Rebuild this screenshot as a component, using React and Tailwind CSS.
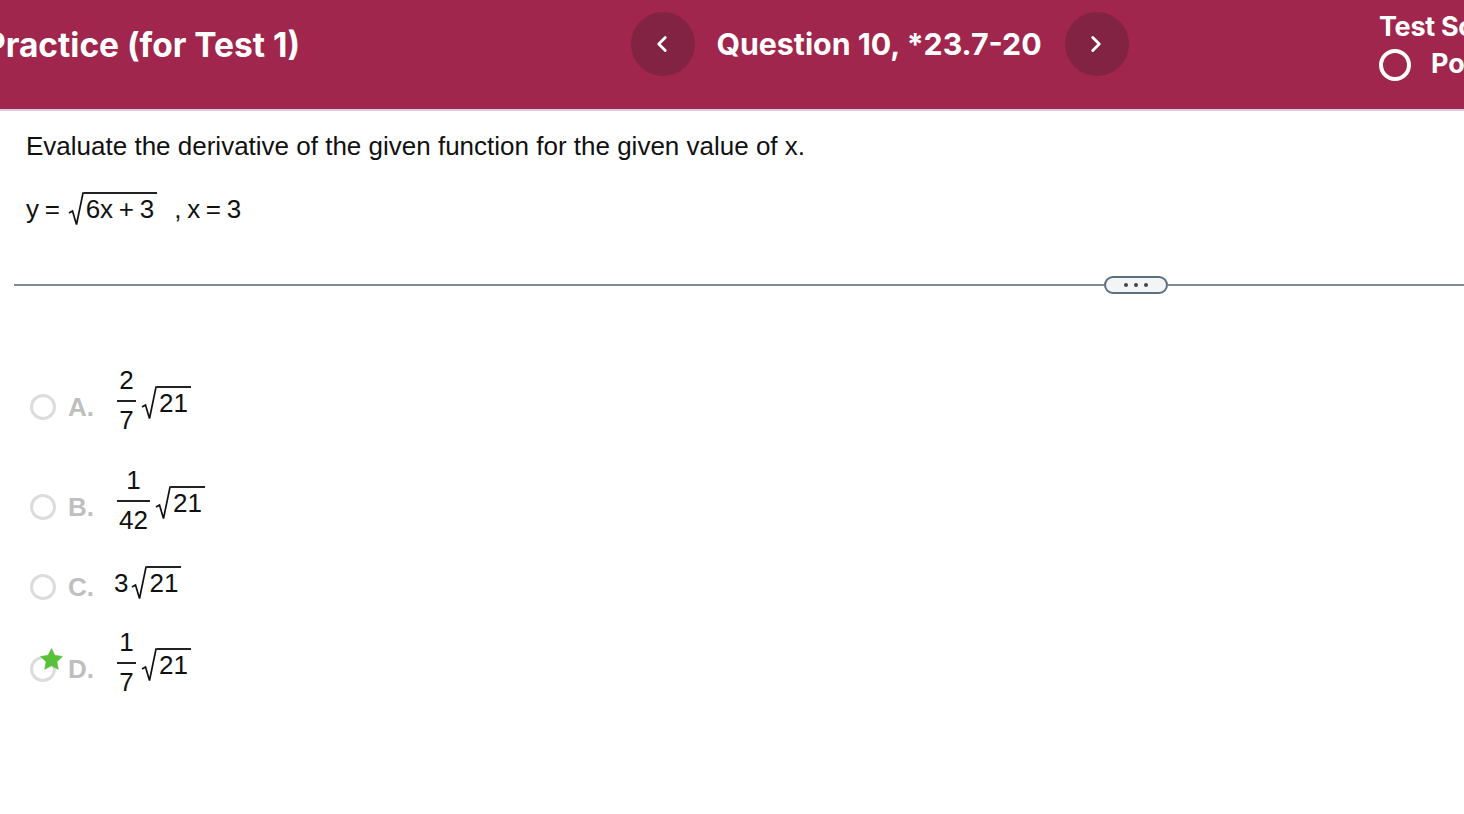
import { ChevronLeft, ChevronRight } from 'lucide-react';

const sans = 'font-["Liberation_Sans",Arial,sans-serif]';

function Radical({ children, className = '' }) {
  return (
    <span className={`inline-flex items-stretch leading-none ${className}`}>
      <svg width="16" height="34" viewBox="0 0 16 34" className="shrink-0" fill="none">
        <path d="M1 21 L4.5 19 L8.5 32.5 L15 1 L16 1" stroke="#111" strokeWidth="1.7" />
      </svg>
      <span className="border-t-2 border-[#222] pr-[3px] pl-[2px] h-[34px] leading-[30px]">{children}</span>
    </span>
  );
}

function Fraction({ top, bottom }) {
  return (
    <span className="inline-flex flex-col items-center">
      <span className="leading-[30px] h-[30px] px-[2px]">{top}</span>
      <span className="w-full min-w-[19px] h-[2px] bg-[#222] mt-[5px] mb-[3px]" />
      <span className="leading-[30px] h-[30px] px-[2px]">{bottom}</span>
    </span>
  );
}

function Star() {
  return (
    <svg width="25" height="25" viewBox="0 0 24 24" className="absolute left-[9px] -top-[9px]">
      <path
        d="M12 1.5 L15.2 8 L22.5 9.1 L17.2 14.2 L18.5 21.4 L12 18 L5.5 21.4 L6.8 14.2 L1.5 9.1 L8.8 8 Z"
        fill="#58c13a"
        stroke="#58c13a"
        strokeWidth="0.6"
        strokeLinejoin="round"
      />
    </svg>
  );
}

function Choice({ letter, correct, children, className = '' }) {
  return (
    <div className={`flex items-center h-[68px] pl-[30px] ${className}`}>
      <span className="relative w-[26px] h-[26px] shrink-0">
        <span className="block w-[26px] h-[26px] rounded-full border-[3px] border-[#dcdcdc] bg-white" />
        {correct && <Star />}
      </span>
      <span className="w-[61px] pl-[12px] text-[26px] font-bold text-[#bfbfbf]">{letter}</span>
      <span className="flex items-center -mt-[14px] text-[26px] text-[#111]">{children}</span>
    </div>
  );
}

export default function App() {
  return (
    <div className={`w-[1464px] h-[814px] overflow-hidden bg-white ${sans}`}>
      <header className="flex h-[111px] bg-[#a0264d] border-b-2 border-[#d5cfe0] text-white font-['Inter',sans-serif] font-bold">
        <div className="w-[631px] shrink-0 overflow-hidden">
          <h1 className="-ml-[16px] mt-[22px] text-[33.5px] leading-[46px] whitespace-nowrap">Practice (for Test 1)</h1>
        </div>
        <div className="flex items-start pt-[12px] w-[498px] shrink-0 justify-between">
          <button className="flex items-center justify-center w-[64px] h-[64px] pr-[2px] rounded-full bg-[#832343]">
            <ChevronLeft size={26} strokeWidth={2.6} />
          </button>
          <span className="mt-[9px] mr-[2px] text-[30.3px] leading-[46px] whitespace-nowrap">Question 10, *23.7-20</span>
          <button className="flex items-center justify-center w-[64px] h-[64px] pr-[2px] rounded-full bg-[#832343]">
            <ChevronRight size={26} strokeWidth={2.6} />
          </button>
        </div>
        <div className="ml-[250px] pt-[9px] whitespace-nowrap">
          <div className="text-[27px] leading-[36px] tracking-[-0.3px]">Test Score</div>
          <div className="flex items-center gap-[20px] text-[27px] leading-[36px] mt-[1px]">
            <span className="w-[32px] h-[32px] mt-[2px] rounded-full border-[4px] border-white shrink-0" />
            <span>Points</span>
          </div>
        </div>
      </header>

      <main className="text-[#111]">
        <p className="pl-[26px] mt-[17px] text-[26px] leading-[36px]">
          Evaluate the derivative of the given function for the given value of x.
        </p>
        <div className="flex items-center pl-[26px] mt-[27px] h-[36px] text-[26px] [word-spacing:-1.5px]">
          <span className="mr-[1px] whitespace-pre">y = </span>
          <Radical className="ml-[1px]">6x + 3</Radical>
          <span className="ml-[17px]">, x = 3</span>
        </div>

        <div className="flex items-center ml-[14px] mt-[49px] h-[18px]">
          <div className="flex-1 h-[2px] bg-[#7f8b99]" />
          <div className="flex items-center justify-center gap-[6px] w-[64px] h-[18px] rounded-full border-2 border-[#5f6e7e] bg-[#f3f4f6]">
            <span className="w-[4px] h-[4px] rounded-full bg-[#444]" />
            <span className="w-[4px] h-[4px] rounded-full bg-[#444]" />
            <span className="w-[4px] h-[4px] rounded-full bg-[#444]" />
          </div>
          <div className="w-[296px] h-[2px] bg-[#7f8b99]" />
        </div>

        <Choice letter="A." className="mt-[79px]">
          <Fraction top="2" bottom="7" />
          <Radical className="ml-[5px] mt-[6px]">21</Radical>
        </Choice>
        <Choice letter="B." className="mt-[32px]">
          <Fraction top="1" bottom="42" />
          <Radical className="ml-[5px] mt-[6px]">21</Radical>
        </Choice>
        <Choice letter="C." className="mt-[12px]">
          <span className="-ml-[3px] mt-[6px]">3</span>
          <Radical className="ml-[3px] mt-[6px]">21</Radical>
        </Choice>
        <Choice letter="D." correct className="mt-[14px]">
          <Fraction top="1" bottom="7" />
          <Radical className="ml-[5px] mt-[6px]">21</Radical>
        </Choice>
      </main>
    </div>
  );
}
